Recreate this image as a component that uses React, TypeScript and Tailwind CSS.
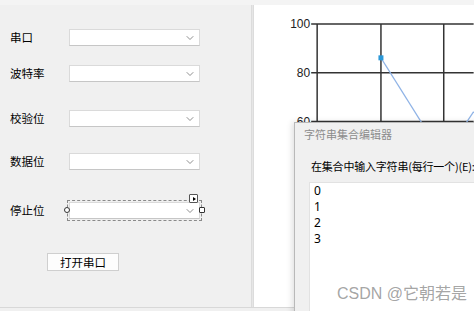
import { ChevronDown } from 'lucide-react';

const cjk = { fontFamily: '"Noto Sans CJK SC", "Noto Sans", sans-serif' };

function Combo() {
  return (
    <div className="w-[131px] h-[17px] bg-white border border-[#dadada] border-b-[#c6c6c6] flex items-center justify-end pr-[3px]">
      <ChevronDown className="w-[12px] h-[12px] text-[#6a6a6a]" strokeWidth={1.5} />
    </div>
  );
}

function Row({ label, mt, selected }: { label: string; mt: string; selected?: boolean }) {
  return (
    <div className={`flex items-center ${mt}`}>
      <span className="w-[59px] text-[11.5px] leading-[17px] text-black" style={cjk}>
        {label}
      </span>
      <div className="relative">
        <Combo />
        {selected && (
          <>
            <div className="absolute -left-[2px] -top-[2px] -right-[2px] -bottom-[2px] border border-dashed border-[#8a8a8a]" />
            <div className="absolute -left-[5px] top-[5px] w-[6px] h-[6px] rounded-full bg-white border border-[#333]" />
            <div className="absolute -right-[5px] top-[5px] w-[6px] h-[6px] rounded-[1px] bg-white border border-[#333]" />
            <div className="absolute right-[2px] -top-[8px] w-[9px] h-[9px] bg-white border border-[#555] rounded-[1px] flex items-center justify-center">
              <div className="w-0 h-0 border-y-[2.5px] border-y-transparent border-l-[3px] border-l-black ml-[1px]" />
            </div>
          </>
        )}
      </div>
    </div>
  );
}

function Chart() {
  return (
    <svg viewBox="254 5 220 303" className="w-full h-full block">
      <g fontFamily='"Liberation Sans", Arial, sans-serif' fontSize="12" fill="#222" textAnchor="end">
        <text x="310" y="28">100</text>
        <text x="310" y="77">80</text>
        <text x="310" y="126">60</text>
      </g>
      <g stroke="#333" strokeWidth="1.5">
        <line x1="311" y1="24" x2="474" y2="24" />
        <line x1="311" y1="73" x2="474" y2="73" />
        <line x1="311" y1="122" x2="474" y2="122" />
        <line x1="317" y1="24" x2="317" y2="308" />
        <line x1="381" y1="24" x2="381" y2="308" />
        <line x1="444" y1="24" x2="444" y2="308" />
      </g>
      <polyline points="381,58 430,136" fill="none" stroke="#8fb3e6" strokeWidth="1.2" />
      <polyline points="462,130 474,112" fill="none" stroke="#8fb3e6" strokeWidth="1.2" />
      <rect x="378.5" y="55.5" width="5" height="5" fill="#2a98d8" />
    </svg>
  );
}

export default function App() {
  return (
    <div className="relative w-[474px] h-[311px] bg-[#f0f0f0] overflow-hidden flex flex-col">
      <div className="h-[5px] bg-[#f4f4f4]" />
      <div className="flex h-[303px] border-b border-[#d8d8d8]">
        <div className="w-[251px] bg-[#f0f0f0] flex flex-col pl-[10px]">
          <Row label="串口" mt="mt-[24px]" />
          <Row label="波特率" mt="mt-[19px]" />
          <Row label="校验位" mt="mt-[28px]" />
          <Row label="数据位" mt="mt-[26px]" />
          <Row label="停止位" mt="mt-[32px]" selected />
          <button
            className="mt-[34px] ml-[37px] w-[72px] h-[18px] bg-[#fdfdfd] border border-[#cfcfcf] text-[11.5px] leading-[16px] text-black"
            style={cjk}
          >
            打开串口
          </button>
        </div>
        <div className="w-[3px] bg-[#e6e6e6] border-x border-[#dcdcdc]" />
        <div className="flex-1 bg-white">
          <Chart />
        </div>
      </div>

      <div className="absolute left-[294px] top-[122px] w-[200px] h-[200px] bg-[#f0f0f0] border border-[#b9b9b9] shadow-[-2px_0_6px_rgba(0,0,0,0.12)]" style={cjk}>
        <div className="pl-[9px] pt-[3px] text-[11px] leading-[16px] text-[#8c8c8c]">字符串集合编辑器</div>
        <div className="pl-[16px] pt-[16px] text-[11px] leading-[16px] text-black whitespace-nowrap tracking-[-0.2px]">
          在集合中输入字符串(每行一个)(E):
        </div>
        <div className="ml-[14px] mt-[8px] h-[140px] bg-white border-t border-l border-[#e2e2e2] pl-[4px] text-[12px] leading-[16px] text-black" style={{ fontFamily: '"Noto Sans", sans-serif' }}>
          <div>0</div>
          <div>1</div>
          <div>2</div>
          <div>3</div>
        </div>
      </div>

      <div className="absolute left-[337px] top-[284px] text-[16px] leading-[20px] text-[#9a9a9a]/90 whitespace-nowrap" style={{ fontFamily: '"Liberation Sans", "Noto Sans CJK SC", sans-serif' }}>
        CSDN @它朝若是
      </div>
    </div>
  );
}
